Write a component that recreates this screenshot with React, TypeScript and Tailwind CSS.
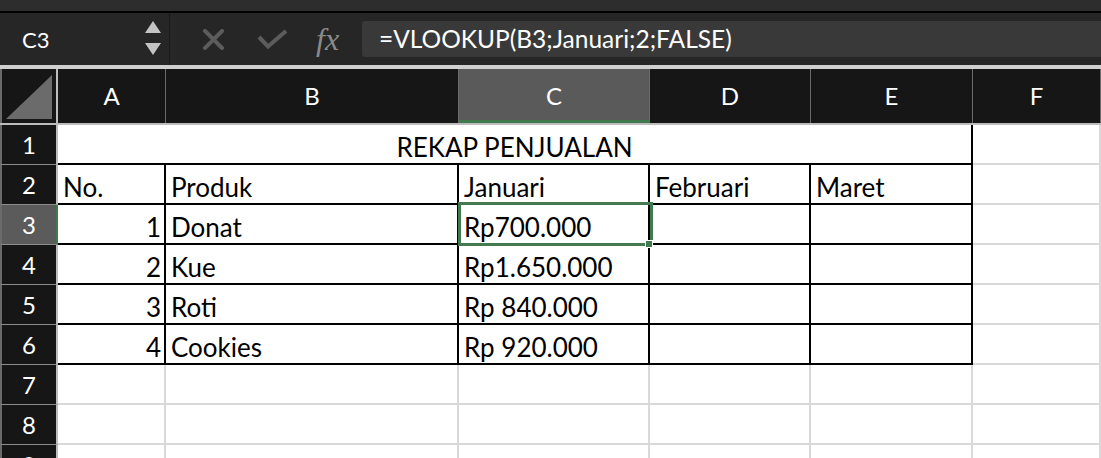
import { clsx, type ClassValue } from "clsx";
import { twMerge } from "tailwind-merge";

function cn(...inputs: ClassValue[]) {
  return twMerge(clsx(inputs));
}

const FONT = { fontFamily: "Lato, 'Open Sans', sans-serif" };

// column widths, A..F
const COLS = [
  { key: "A", w: "w-[108px]" },
  { key: "B", w: "w-[293px]" },
  { key: "C", w: "w-[191px]" },
  { key: "D", w: "w-[161px]" },
  { key: "E", w: "w-[162px]" },
  { key: "F", w: "flex-1" },
];

const DATA = [
  { no: "1", produk: "Donat", jan: "Rp700.000" },
  { no: "2", produk: "Kue", jan: "Rp1.650.000" },
  { no: "3", produk: "Roti", jan: "Rp 840.000" },
  { no: "4", produk: "Cookies", jan: "Rp 920.000" },
];

function RowHeader({ n, active }: { n: number; active?: boolean }) {
  return (
    <div
      className={cn(
        "w-[58px] shrink-0 h-full flex items-center justify-center text-white text-[24px] border-l-2 border-l-[#6a6a6a] border-b border-b-[#8c8c8c] border-r-2 border-r-[#bdbdbd] bg-[#161616]",
        active && "bg-[#5b5b5b] border-r-[#3f7a4f]"
      )}
    >
      {n}
    </div>
  );
}

function Cell({
  w,
  className,
  children,
}: {
  w: string;
  className?: string;
  children?: React.ReactNode;
}) {
  return (
    <div
      className={cn(
        "h-full shrink-0 flex items-end px-[5px] pb-[3px] text-[26px] leading-none text-black whitespace-nowrap overflow-hidden border-r-2 border-b-2 border-r-[#d9d9d9] border-b-[#d9d9d9]",
        w,
        className
      )}
    >
      {children}
    </div>
  );
}

export default function App() {
  const boxed = "border-r-black border-b-black";

  return (
    <div className="w-[1101px] h-[458px] overflow-hidden bg-white relative" style={FONT}>
      {/* top strip */}
      <div className="h-[11px] bg-[#2d2d2d]" />
      <div className="h-[2px] bg-black" />

      {/* formula bar */}
      <div className="h-[52px] bg-[#262626] flex items-center">
        <div className="w-[170px] h-full flex items-center justify-between pl-[22px] pr-[8px] border-r border-r-[#1a1a1a]">
          <span className="text-white text-[22px]">C3</span>
          <svg width="16" height="36" viewBox="0 0 16 36">
            <polygon points="8,0 16,12 0,12" fill="#c4c4c4" />
            <polygon points="0,22 16,22 8,34" fill="#c4c4c4" />
          </svg>
        </div>
        <div className="w-[192px] h-full flex items-center pl-[33px]">
          <svg width="21" height="21" viewBox="0 0 21 21">
            <path d="M2 2 L19 19 M19 2 L2 19" stroke="#5c5c5c" strokeWidth="4" strokeLinecap="square" />
          </svg>
          <svg width="31" height="21" viewBox="0 0 31 21" className="ml-[33px]">
            <path d="M2 8 L11 17.5 L29 2" stroke="#5c5c5c" strokeWidth="4" fill="none" />
          </svg>
          <span
            className="ml-[28px] text-[32px] italic text-[#8a8a8a] leading-none"
            style={{ fontFamily: "'Liberation Serif', serif" }}
          >
            fx
          </span>
        </div>
        <div className="flex-1 h-[36px] bg-[#393939] rounded-l-[3px] flex items-center pl-[17px] text-white text-[24.5px]">
          =VLOOKUP(B3;Januari;2;FALSE)
        </div>
      </div>
      <div className="h-[4px] bg-[#cfcfcf]" />

      {/* column headers */}
      <div className="h-[56px] flex bg-[#161616] border-b-2 border-b-[#bdbdbd]">
        <div className="w-[58px] shrink-0 h-full border-l-2 border-l-[#6a6a6a] border-r-2 border-r-[#bdbdbd] flex items-end justify-end p-[4px]">
          <svg width="46" height="44" viewBox="0 0 46 44">
            <polygon points="46,0 46,44 0,44" fill="#6b6b6b" />
          </svg>
        </div>
        {COLS.map((c) => (
          <div
            key={c.key}
            className={cn(
              "h-full shrink-0 flex items-center justify-center text-white text-[24px] border-r border-r-[#6a6a6a]",
              c.w,
              c.key === "C" && "bg-[#5a5a5a] border-b-[3px] border-b-[#3f7a4f] pt-[3px]"
            )}
          >
            {c.key}
          </div>
        ))}
      </div>

      {/* grid */}
      <div className="relative">
        {/* row 1 */}
        <div className="h-[40px] flex">
          <RowHeader n={1} />
          <Cell w="w-[915px]" className={cn(boxed, "justify-center")}>
            REKAP PENJUALAN
          </Cell>
          <Cell w="flex-1" />
        </div>

        {/* row 2 */}
        <div className="h-[40px] flex">
          <RowHeader n={2} />
          <Cell w="w-[108px]" className={boxed}>No.</Cell>
          <Cell w="w-[293px]" className={boxed}>Produk</Cell>
          <Cell w="w-[191px]" className={boxed}>Januari</Cell>
          <Cell w="w-[161px]" className={boxed}>Februari</Cell>
          <Cell w="w-[162px]" className={boxed}>Maret</Cell>
          <Cell w="flex-1" />
        </div>

        {DATA.map((d, i) => (
          <div key={d.no} className="h-[40px] flex">
            <RowHeader n={i + 3} active={i === 0} />
            <Cell w="w-[108px]" className={cn(boxed, "justify-end pr-[3px]")}>{d.no}</Cell>
            <Cell w="w-[293px]" className={boxed}>{d.produk}</Cell>
            <Cell w="w-[191px]" className={boxed}>{d.jan}</Cell>
            <Cell w="w-[161px]" className={boxed} />
            <Cell w="w-[162px]" className={boxed} />
            <Cell w="flex-1" />
          </div>
        ))}

        {[7, 8, 9].map((n) => (
          <div key={n} className="h-[40px] flex">
            <RowHeader n={n} />
            {COLS.map((c) => (
              <Cell key={c.key} w={c.w} />
            ))}
          </div>
        ))}

        {/* active cell selection */}
        <div className="absolute left-[458px] top-[77px] w-[195px] h-[44px] border-[3px] border-[#437a50] pointer-events-none" />
        <div className="absolute left-[645px] top-[115px] w-[8px] h-[8px] bg-[#437a50] border border-white" />
      </div>
    </div>
  );
}
